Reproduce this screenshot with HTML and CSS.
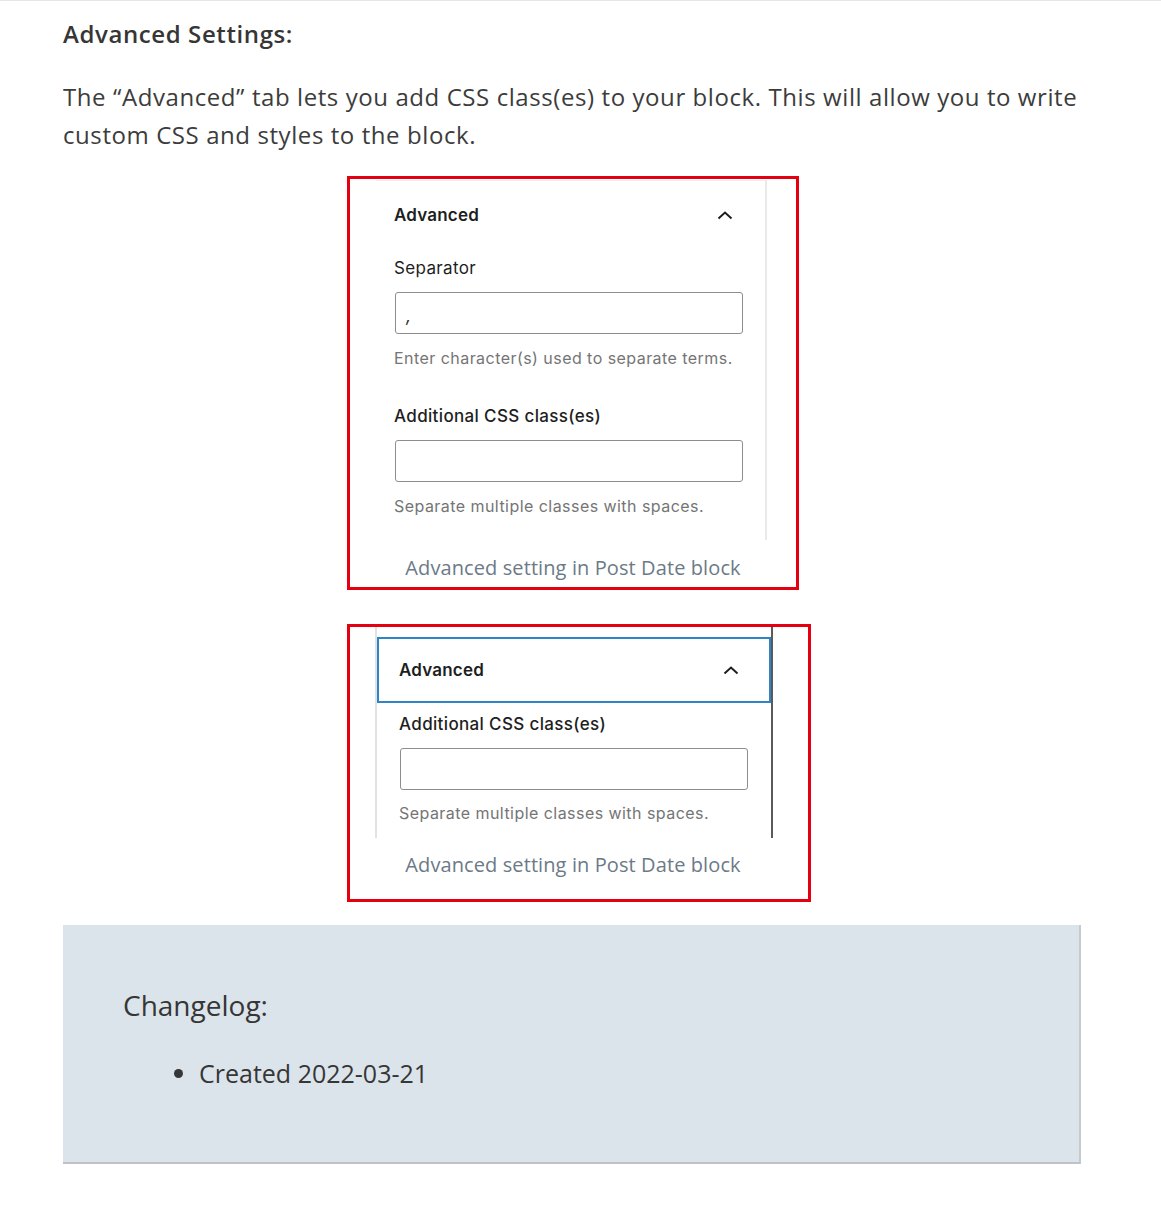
FILE: index.html
```html
<!DOCTYPE html>
<html lang="en">
<head>
<meta charset="utf-8">
<title>Advanced Settings</title>
<link rel="stylesheet" href="styles.css">
</head>
<body>
<div class="topline"></div>
<main class="content">
  <h3 class="heading">Advanced Settings:</h3>
  <p class="lead">The “Advanced” tab lets you add CSS class(es) to your block. This will allow you to write custom CSS and styles to the block.</p>

  <div class="figures">
    <figure class="shot shot-one">
      <div class="panel panel-one">
        <div class="panel-head">
          <span class="panel-title">Advanced</span>
          <svg class="chev" width="16" height="10" viewBox="0 0 16 10"><path d="M1.5 8.5 L8 2.5 L14.5 8.5" fill="none" stroke="#1e1e1e" stroke-width="2"/></svg>
        </div>
        <div class="field field-first">
          <div class="field-label light">Separator</div>
          <div class="input"><span class="comma">,</span></div>
          <div class="help">Enter character(s) used to separate terms.</div>
        </div>
        <div class="field field-gap">
          <div class="field-label">Additional CSS class(es)</div>
          <div class="input input-second"></div>
          <div class="help">Separate multiple classes with spaces.</div>
        </div>
      </div>
      <figcaption class="caption">Advanced setting in Post Date block</figcaption>
    </figure>

    <figure class="shot shot-two">
      <div class="panel panel-two">
        <div class="panel-head focused">
          <span class="panel-title">Advanced</span>
          <svg class="chev" width="16" height="10" viewBox="0 0 16 10"><path d="M1.5 8.5 L8 2.5 L14.5 8.5" fill="none" stroke="#1e1e1e" stroke-width="2"/></svg>
        </div>
        <div class="field field-two">
          <div class="field-label">Additional CSS class(es)</div>
          <div class="input"></div>
          <div class="help">Separate multiple classes with spaces.</div>
        </div>
      </div>
      <figcaption class="caption caption-two">Advanced setting in Post Date block</figcaption>
    </figure>
  </div>

  <section class="changelog">
    <h2 class="changelog-title">Changelog:</h2>
    <ul class="changelog-list">
      <li>Created 2022-03-21</li>
    </ul>
  </section>
</main>
</body>
</html>
```

FILE: styles.css
```css
html, body {
  margin: 0;
  padding: 0;
  background: #ffffff;
}
body {
  font-family: "Open Sans", "Liberation Sans", sans-serif;
  color: #3a3a3a;
}
.topline {
  height: 1px;
  background: #e6e6e6;
}
.content {
  width: 1018px;
  margin-left: 63px;
  padding-top: 16px;
  padding-bottom: 60px;
}
.heading {
  margin: 0;
  font-size: 24px;
  line-height: 34px;
  font-weight: 600;
  letter-spacing: 0.6px;
  color: #363636;
}
.lead {
  margin: 27px 0 0;
  font-size: 24px;
  line-height: 38px;
  font-weight: 400;
  letter-spacing: 0.58px;
  color: #3c3c3c;
}
.figures {
  margin-top: 22px;
  padding-left: 284px;
  display: flex;
  flex-direction: column;
  align-items: flex-start;
  gap: 34px;
}
.shot {
  margin: 0;
  border: 3px solid #e5000f;
  box-sizing: border-box;
  background: #fff;
  display: flex;
  flex-direction: column;
}
.shot-one {
  width: 452px;
  height: 414px;
  padding: 1px 0 0 26px;
}
.shot-two {
  width: 464px;
  height: 278px;
  padding: 0 0 0 25px;
}
.panel {
  box-sizing: border-box;
  font-family: Inter, "Liberation Sans", sans-serif;
  color: #1e1e1e;
}
.panel-one {
  width: 391px;
  height: 360px;
  border-top: 1px solid #ededed;
  border-right: 2px solid #e9e9e9;
  padding: 0 20px 0 18px;
}
.panel-two {
  width: 398px;
  height: 211px;
  border-left: 2px solid #e2e2e2;
  border-right: 2px solid #5a5a5a;
  padding-top: 10px;
}
.panel-head {
  display: flex;
  align-items: center;
  justify-content: space-between;
  height: 66px;
  box-sizing: border-box;
}
.panel-one .panel-head {
  height: 68px;
  padding-top: 0;
  padding-right: 12px;
}
.panel-head.focused {
  border: 2px solid #2f84c6;
  padding: 0 30px 0 20px;
  height: 66px;
}
.panel-title {
  font-size: 17px;
  font-weight: 600;
  letter-spacing: 0.2px;
}
.chev {
  display: block;
}
.field-label {
  font-size: 17px;
  font-weight: 500;
  line-height: 24px;
  height: 24px;
  letter-spacing: 0.35px;
}
.field-label.light {
  font-weight: 400;
}
.field-first {
  margin-top: 7px;
}
.field-gap {
  margin-top: 36px;
}
.field-two {
  padding: 9px 19px 0 22px;
}
.input {
  margin-top: 12px;
  margin-left: 1px;
  width: 348px;
  height: 42px;
  border: 1.5px solid #8d8d8d;
  border-radius: 3px;
  box-sizing: border-box;
  padding-left: 10px;
  display: flex;
  align-items: center;
}
.comma {
  font-size: 18px;
  color: #333;
  font-style: italic;
  line-height: 1;
  padding-top: 6px;
}
.help {
  margin-top: 14px;
  font-size: 16px;
  line-height: 20px;
  color: #757575;
  letter-spacing: 0.45px;
}
.field-two .help {
  margin-top: 13px;
}
.caption {
  margin-top: 14px;
  margin-left: -26px;
  text-align: center;
  font-size: 20px;
  line-height: 28px;
  color: #6c7a87;
  letter-spacing: 0.1px;
  width: 446px;
}
.caption-two {
  margin-top: 13px;
  margin-left: -25px;
  width: 446px;
}
.changelog {
  margin-top: 23px;
  background: #dce4eb;
  border-right: 2px solid #c6cacf;
  border-bottom: 2px solid #bfc3c8;
  box-sizing: border-box;
  height: 239px;
  padding: 60px 60px 0 60px;
}
.changelog-title {
  margin: 0;
  font-size: 28px;
  line-height: 40px;
  font-weight: 400;
  color: #363636;
}
.changelog-list {
  margin: 30px 0 0;
  padding-left: 76px;
  font-size: 25px;
  line-height: 36px;
  color: #363636;
}
```
